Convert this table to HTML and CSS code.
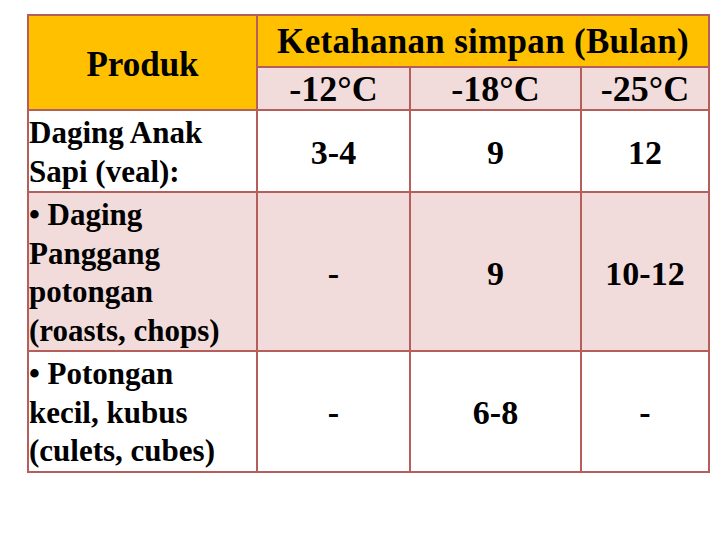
FILE: index.html
```html
<!DOCTYPE html>
<html>
<head>
<meta charset="utf-8">
<link rel="stylesheet" href="styles.css">
</head>
<body>
<table class="tbl">
  <colgroup>
    <col class="c1"><col class="c2"><col class="c3"><col class="c4">
  </colgroup>
  <tr class="h1">
    <th class="produk" rowspan="2">Produk</th>
    <th class="keta" colspan="3">Ketahanan simpan (Bulan)</th>
  </tr>
  <tr class="h2">
    <th class="temp">-12°C</th>
    <th class="temp">-18°C</th>
    <th class="temp">-25°C</th>
  </tr>
  <tr class="r1">
    <td class="name">Daging Anak Sapi (veal):</td>
    <td class="val">3-4</td>
    <td class="val">9</td>
    <td class="val">12</td>
  </tr>
  <tr class="r2 pink">
    <td class="name">• Daging Panggang potongan (roasts, chops)</td>
    <td class="val">-</td>
    <td class="val">9</td>
    <td class="val">10-12</td>
  </tr>
  <tr class="r3">
    <td class="name">• Potongan kecil, kubus (culets, cubes)</td>
    <td class="val">-</td>
    <td class="val">6-8</td>
    <td class="val">-</td>
  </tr>
</table>
</body>
</html>
```
FILE: styles.css
```css
html, body {
  margin: 0;
  padding: 0;
  background: #ffffff;
}
body {
  padding: 14px 0 0 27px;
  font-family: "Liberation Serif", "Times New Roman", serif;
  font-weight: bold;
  color: #000;
}
.tbl {
  border-collapse: collapse;
  table-layout: fixed;
  width: 681px;
}
.c1 { width: 229px; }
.c2 { width: 153px; }
.c3 { width: 171px; }
.c4 { width: 128px; }
.tbl th, .tbl td {
  border: 2px solid #b65e5a;
  padding: 0;
  font-weight: bold;
}
.tbl .h1 { height: 52px; }
.tbl .h2 { height: 43px; }
.tbl .produk {
  background: #ffc000;
  font-size: 35px;
  text-align: center;
  vertical-align: middle;
  padding-top: 4px;
}
.tbl .keta {
  background: #ffc000;
  font-size: 35px;
  letter-spacing: 0.3px;
  text-align: center;
  vertical-align: middle;
  line-height: 40px;
  padding-top: 2px;
}
.tbl .temp {
  background: #f2dcdb;
  font-size: 36px;
  text-align: center;
  vertical-align: middle;
  line-height: 40px;
}
.tbl .name {
  font-size: 31px;
  line-height: 38.5px;
  text-align: left;
  vertical-align: top;
  padding: 3px 20px 0 0;
}
.tbl .val {
  font-size: 34px;
  text-align: center;
  vertical-align: middle;
  padding-top: 4px;
}
.tbl .pink td {
  background: #f2dcdb;
}
```
